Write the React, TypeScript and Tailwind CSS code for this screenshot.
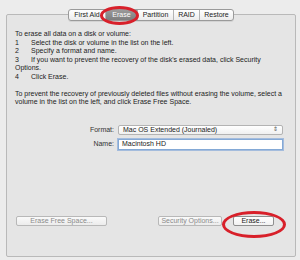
export default function App() {
  const tabs = ["First Aid", "Erase", "Partition", "RAID", "Restore"];
  const widths = ["w-[36px]", "w-[32px]", "w-[36px]", "w-[26px]", "w-[34px]"];

  return (
    <div className="relative w-[300px] h-[260px] overflow-hidden bg-[#ececec] pt-[14px] pl-[6px] font-['Liberation_Sans',Arial,sans-serif] text-[#222]">
      {/* Main panel */}
      <div className="flex flex-col w-[290px] h-[243px] border border-[#b9b9b9] rounded-[2px] bg-[#e5e5e5]">
        {/* Tab bar */}
        <div className="flex justify-center -mt-[6px]">
          <div className="flex h-[12px] border border-[#9a9a9a] rounded-[3px] bg-gradient-to-b from-white to-[#ececec] text-[7px] leading-[10px] shadow-[0_1px_0_rgba(0,0,0,0.08)]">
            {tabs.map((t, i) => (
              <div
                key={t}
                className={
                  widths[i] +
                  " flex items-center justify-center " +
                  (i > 0 ? "border-l border-[#b4b4b4] " : "") +
                  (t === "Erase" ? "bg-gradient-to-b from-[#9a9a9a] to-[#7d7d7d] text-white" : "")
                }
              >
                {t}
              </div>
            ))}
          </div>
        </div>

        {/* Instructions */}
        <div className="pl-[8px] pt-[9px] text-[7px] leading-[8.5px]">
          <div>To erase all data on a disk or volume:</div>
          <div className="flex"><span className="w-[16px]">1</span>Select the disk or volume in the list on the left.</div>
          <div className="flex"><span className="w-[16px]">2</span>Specify a format and name.</div>
          <div className="flex"><span className="w-[16px]">3</span>If you want to prevent the recovery of the disk's erased data, click Security</div>
          <div>Options.</div>
          <div className="flex"><span className="w-[16px]">4</span>Click Erase.</div>
          <div className="mt-[8.5px]">To prevent the recovery of previously deleted files without erasing the volume, select a</div>
          <div>volume in the list on the left, and click Erase Free Space.</div>
        </div>

        {/* Form */}
        <div className="flex flex-col gap-[4px] mt-[18px] text-[7px]">
          <div className="flex items-center">
            <span className="w-[111px] text-right pr-[4px] text-[#333]">Format:</span>
            <div className="flex items-center justify-between w-[165px] h-[10px] px-[4px] border border-[#b3b3b3] rounded-[2px] bg-gradient-to-b from-white to-[#f0f0f0]">
              <span>Mac OS Extended (Journaled)</span>
              <span className="text-[6px] text-[#555]">⇕</span>
            </div>
          </div>
          <div className="flex items-center">
            <span className="w-[111px] text-right pr-[4px] text-[#333]">Name:</span>
            <div className="flex items-center w-[165px] h-[11px] px-[3px] border border-[#84a9d6] bg-white shadow-[0_0_0_1px_rgba(120,160,215,0.6)]">
              Macintosh HD
            </div>
          </div>
        </div>

        {/* Buttons */}
        <div className="flex items-center mt-auto mb-[30px] text-[7px]">
          <div className="ml-[9px] flex items-center justify-center w-[91px] h-[10px] border border-[#b8b8b8] rounded-[2px] bg-gradient-to-b from-[#fafafa] to-[#ececec] text-[#8a8a8a]">
            Erase Free Space...
          </div>
          <div className="ml-[51px] flex items-center justify-center w-[64px] h-[10px] border border-[#b8b8b8] rounded-[2px] bg-gradient-to-b from-[#fafafa] to-[#ececec] text-[#8a8a8a]">
            Security Options...
          </div>
          <div className="ml-[11px] flex items-center justify-center w-[41px] h-[10px] border border-[#8f8f8f] rounded-[2px] bg-gradient-to-b from-white to-[#f2f2f2] text-[#222]">
            Erase...
          </div>
        </div>
      </div>

      {/* Red highlight circles */}
      <div className="absolute left-[100px] top-[6px] w-[39px] h-[19px] rounded-[50%] border-[3px] border-[#d8202a]" />
      <div className="absolute left-[222px] top-[211px] w-[64px] h-[27px] rounded-[50%] border-[3px] border-[#d8202a]" />
    </div>
  );
}
